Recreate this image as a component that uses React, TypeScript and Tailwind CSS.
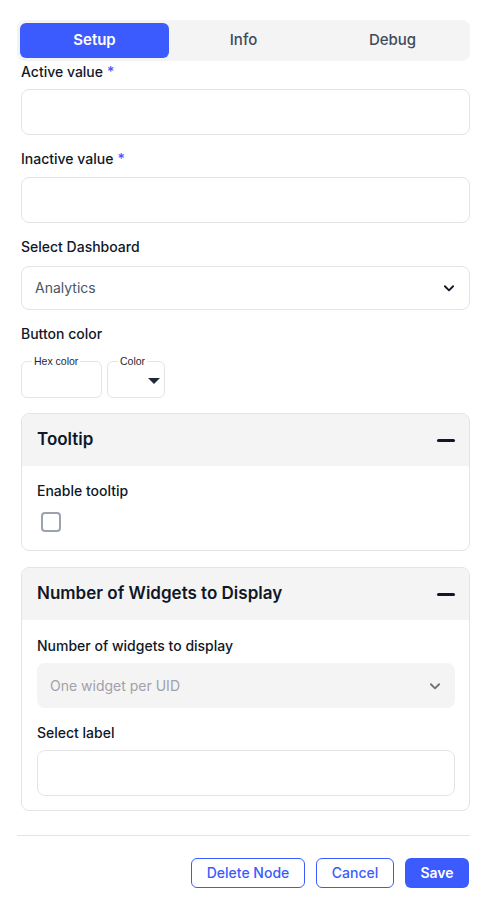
import React from "react";

const Label = ({ text, required = false }: { text: string; required?: boolean }) => (
  <div className="text-sm font-medium leading-5 text-[#101828]">
    {text}
    {required && <span className="ml-1 text-[#3c5bff]">*</span>}
  </div>
);

const Chevron = ({ color = "#101828" }: { color?: string }) => (
  <svg width="14" height="14" viewBox="0 0 24 24" fill="none" stroke={color} strokeWidth={3.2} strokeLinecap="round" strokeLinejoin="round">
    <path d="M5 9l7 7 7-7" />
  </svg>
);

const Minus = () => <div className="h-[3px] w-[18px] rounded-sm bg-[#101828]" />;

export default function App() {
  return (
    <div className="min-h-[904px] w-[486px] bg-white pl-[17px] pr-[16px] pt-5 font-['Inter',sans-serif] text-[#101828]">
      <div className="grid grid-cols-3 gap-0 rounded-lg bg-[#f4f4f5] p-[3px]">
        <button className="h-[35px] rounded-md bg-[#3c5bff] text-[15px] font-semibold text-white">Setup</button>
        <button className="h-[35px] text-[15px] font-medium text-[#3f4a5c]">Info</button>
        <button className="h-[35px] text-[15px] font-medium text-[#3f4a5c]">Debug</button>
      </div>

      <div className="pl-1">
        <div className="mt-[1px]">
          <Label text="Active value" required />
        </div>
        <div className="mt-[7px] h-[46px] rounded-lg border border-[#e4e4e7]" />

        <div className="mt-[14px]">
          <Label text="Inactive value" required />
        </div>
        <div className="mt-2 h-[46px] rounded-lg border border-[#e4e4e7]" />

        <div className="mt-[14px]">
          <Label text="Select Dashboard" />
        </div>
        <div className="mt-[9px] flex h-[44px] items-center justify-between rounded-lg border border-[#e4e4e7] pl-[13px] pr-[13px]">
          <span className="text-sm text-[#4b5565]">Analytics</span>
          <Chevron />
        </div>

        <div className="mt-[14px]">
          <Label text="Button color" />
        </div>
        <div className="mt-[12px] flex gap-[5px]">
          <fieldset className="h-[42px] w-[81px] rounded-md border border-[#e4e4e7] px-[10px]">
            <legend className="px-[2px] font-['Liberation_Sans',sans-serif] text-[10.5px] leading-[10px] text-[#1f2937]">Hex color</legend>
          </fieldset>
          <fieldset className="relative h-[42px] w-[58px] rounded-md border border-[#e4e4e7] px-[10px]">
            <legend className="px-[2px] font-['Liberation_Sans',sans-serif] text-[10.5px] leading-[10px] text-[#1f2937]">Color</legend>
            <div className="absolute right-[4px] top-[12px] h-0 w-0 border-x-[6px] border-t-[6px] border-x-transparent border-t-[#1f2937]" />
          </fieldset>
        </div>

        <div className="mt-[15px] overflow-hidden rounded-lg border border-[#e4e4e7]">
          <div className="flex h-[52px] items-center justify-between bg-[#f4f4f5] pl-[15px] pr-[14px]">
            <span className="text-[17px] font-semibold">Tooltip</span>
            <Minus />
          </div>
          <div className="px-[15px] pb-[18px] pt-[15px]">
            <Label text="Enable tooltip" />
            <div className="ml-1 mt-[11px] h-5 w-5 rounded-[4px] border-2 border-[#9ca3af]" />
          </div>
        </div>

        <div className="mt-4 overflow-hidden rounded-lg border border-[#e4e4e7]">
          <div className="flex h-[52px] items-center justify-between bg-[#f4f4f5] pl-[15px] pr-[14px]">
            <span className="text-[17px] font-semibold">Number of Widgets to Display</span>
            <Minus />
          </div>
          <div className="pb-[14px] pl-[15px] pr-[14px] pt-4">
            <Label text="Number of widgets to display" />
            <div className="mt-[7px] flex h-[45px] items-center justify-between rounded-lg bg-[#f4f4f5] pl-[13px] pr-[13px]">
              <span className="text-sm text-[#a1a1aa]">One widget per UID</span>
              <Chevron color="#71717a" />
            </div>
            <div className="mt-[15px]">
              <Label text="Select label" />
            </div>
            <div className="mt-[7px] h-[46px] rounded-lg border border-[#e4e4e7]" />
          </div>
        </div>
      </div>

      <div className="mt-6 border-t border-[#e4e4e7]" />

      <div className="mt-[22px] flex justify-end gap-[11px] pr-[1px]">
        <button className="h-[30px] w-[114px] rounded-md border border-[#3c5bff] text-sm font-medium text-[#3c5bff]">Delete Node</button>
        <button className="h-[30px] w-[78px] rounded-md border border-[#3c5bff] text-sm font-medium text-[#3c5bff]">Cancel</button>
        <button className="h-[30px] w-[64px] rounded-md bg-[#3c5bff] text-sm font-semibold text-white">Save</button>
      </div>
    </div>
  );
}
